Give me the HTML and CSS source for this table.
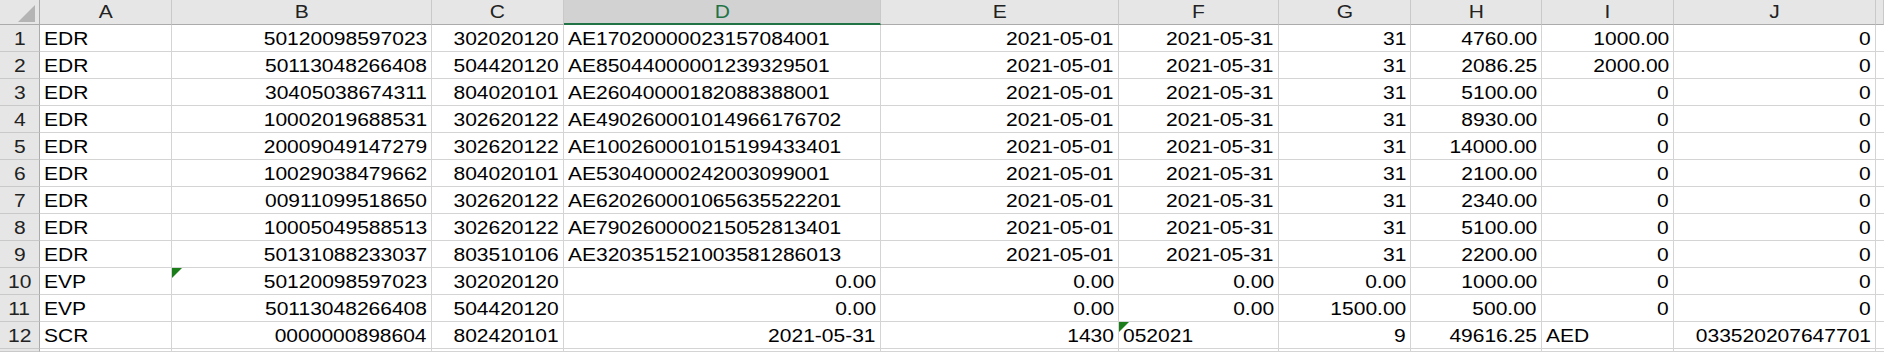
FILE: index.html
```html
<!DOCTYPE html>
<html>
<head>
<meta charset="utf-8">
<link rel="stylesheet" href="styles.css">
</head>
<body>
<div class="sheet">
  <div class="corner"><div class="corner-tri"></div></div>
  <div class="ch"><span class="t c">A</span></div>
  <div class="ch"><span class="t c">B</span></div>
  <div class="ch"><span class="t c">C</span></div>
  <div class="ch sel"><span class="t c">D</span></div>
  <div class="ch"><span class="t c">E</span></div>
  <div class="ch"><span class="t c">F</span></div>
  <div class="ch"><span class="t c">G</span></div>
  <div class="ch"><span class="t c">H</span></div>
  <div class="ch"><span class="t c">I</span></div>
  <div class="ch"><span class="t c">J</span></div>
  <div class="ch"></div>

  <div class="rh"><span class="t c">1</span></div>
  <div class="cell"><span class="t l">EDR</span></div>
  <div class="cell r"><span class="t rr">50120098597023</span></div>
  <div class="cell r"><span class="t rr">302020120</span></div>
  <div class="cell"><span class="t l">AE17020000023157084001</span></div>
  <div class="cell r"><span class="t rr">2021-05-01</span></div>
  <div class="cell r"><span class="t rr">2021-05-31</span></div>
  <div class="cell r"><span class="t rr">31</span></div>
  <div class="cell r"><span class="t rr">4760.00</span></div>
  <div class="cell r"><span class="t rr">1000.00</span></div>
  <div class="cell r"><span class="t rr">0</span></div>
  <div class="cell"></div>

  <div class="rh"><span class="t c">2</span></div>
  <div class="cell"><span class="t l">EDR</span></div>
  <div class="cell r"><span class="t rr">50113048266408</span></div>
  <div class="cell r"><span class="t rr">504420120</span></div>
  <div class="cell"><span class="t l">AE85044000001239329501</span></div>
  <div class="cell r"><span class="t rr">2021-05-01</span></div>
  <div class="cell r"><span class="t rr">2021-05-31</span></div>
  <div class="cell r"><span class="t rr">31</span></div>
  <div class="cell r"><span class="t rr">2086.25</span></div>
  <div class="cell r"><span class="t rr">2000.00</span></div>
  <div class="cell r"><span class="t rr">0</span></div>
  <div class="cell"></div>

  <div class="rh"><span class="t c">3</span></div>
  <div class="cell"><span class="t l">EDR</span></div>
  <div class="cell r"><span class="t rr">30405038674311</span></div>
  <div class="cell r"><span class="t rr">804020101</span></div>
  <div class="cell"><span class="t l">AE26040000182088388001</span></div>
  <div class="cell r"><span class="t rr">2021-05-01</span></div>
  <div class="cell r"><span class="t rr">2021-05-31</span></div>
  <div class="cell r"><span class="t rr">31</span></div>
  <div class="cell r"><span class="t rr">5100.00</span></div>
  <div class="cell r"><span class="t rr">0</span></div>
  <div class="cell r"><span class="t rr">0</span></div>
  <div class="cell"></div>

  <div class="rh"><span class="t c">4</span></div>
  <div class="cell"><span class="t l">EDR</span></div>
  <div class="cell r"><span class="t rr">10002019688531</span></div>
  <div class="cell r"><span class="t rr">302620122</span></div>
  <div class="cell"><span class="t l">AE490260001014966176702</span></div>
  <div class="cell r"><span class="t rr">2021-05-01</span></div>
  <div class="cell r"><span class="t rr">2021-05-31</span></div>
  <div class="cell r"><span class="t rr">31</span></div>
  <div class="cell r"><span class="t rr">8930.00</span></div>
  <div class="cell r"><span class="t rr">0</span></div>
  <div class="cell r"><span class="t rr">0</span></div>
  <div class="cell"></div>

  <div class="rh"><span class="t c">5</span></div>
  <div class="cell"><span class="t l">EDR</span></div>
  <div class="cell r"><span class="t rr">20009049147279</span></div>
  <div class="cell r"><span class="t rr">302620122</span></div>
  <div class="cell"><span class="t l">AE100260001015199433401</span></div>
  <div class="cell r"><span class="t rr">2021-05-01</span></div>
  <div class="cell r"><span class="t rr">2021-05-31</span></div>
  <div class="cell r"><span class="t rr">31</span></div>
  <div class="cell r"><span class="t rr">14000.00</span></div>
  <div class="cell r"><span class="t rr">0</span></div>
  <div class="cell r"><span class="t rr">0</span></div>
  <div class="cell"></div>

  <div class="rh"><span class="t c">6</span></div>
  <div class="cell"><span class="t l">EDR</span></div>
  <div class="cell r"><span class="t rr">10029038479662</span></div>
  <div class="cell r"><span class="t rr">804020101</span></div>
  <div class="cell"><span class="t l">AE53040000242003099001</span></div>
  <div class="cell r"><span class="t rr">2021-05-01</span></div>
  <div class="cell r"><span class="t rr">2021-05-31</span></div>
  <div class="cell r"><span class="t rr">31</span></div>
  <div class="cell r"><span class="t rr">2100.00</span></div>
  <div class="cell r"><span class="t rr">0</span></div>
  <div class="cell r"><span class="t rr">0</span></div>
  <div class="cell"></div>

  <div class="rh"><span class="t c">7</span></div>
  <div class="cell"><span class="t l">EDR</span></div>
  <div class="cell r"><span class="t rr">00911099518650</span></div>
  <div class="cell r"><span class="t rr">302620122</span></div>
  <div class="cell"><span class="t l">AE620260001065635522201</span></div>
  <div class="cell r"><span class="t rr">2021-05-01</span></div>
  <div class="cell r"><span class="t rr">2021-05-31</span></div>
  <div class="cell r"><span class="t rr">31</span></div>
  <div class="cell r"><span class="t rr">2340.00</span></div>
  <div class="cell r"><span class="t rr">0</span></div>
  <div class="cell r"><span class="t rr">0</span></div>
  <div class="cell"></div>

  <div class="rh"><span class="t c">8</span></div>
  <div class="cell"><span class="t l">EDR</span></div>
  <div class="cell r"><span class="t rr">10005049588513</span></div>
  <div class="cell r"><span class="t rr">302620122</span></div>
  <div class="cell"><span class="t l">AE790260000215052813401</span></div>
  <div class="cell r"><span class="t rr">2021-05-01</span></div>
  <div class="cell r"><span class="t rr">2021-05-31</span></div>
  <div class="cell r"><span class="t rr">31</span></div>
  <div class="cell r"><span class="t rr">5100.00</span></div>
  <div class="cell r"><span class="t rr">0</span></div>
  <div class="cell r"><span class="t rr">0</span></div>
  <div class="cell"></div>

  <div class="rh"><span class="t c">9</span></div>
  <div class="cell"><span class="t l">EDR</span></div>
  <div class="cell r"><span class="t rr">50131088233037</span></div>
  <div class="cell r"><span class="t rr">803510106</span></div>
  <div class="cell"><span class="t l">AE320351521003581286013</span></div>
  <div class="cell r"><span class="t rr">2021-05-01</span></div>
  <div class="cell r"><span class="t rr">2021-05-31</span></div>
  <div class="cell r"><span class="t rr">31</span></div>
  <div class="cell r"><span class="t rr">2200.00</span></div>
  <div class="cell r"><span class="t rr">0</span></div>
  <div class="cell r"><span class="t rr">0</span></div>
  <div class="cell"></div>

  <div class="rh"><span class="t c">10</span></div>
  <div class="cell"><span class="t l">EVP</span></div>
  <div class="cell r mark"><span class="flag"></span><span class="t rr">50120098597023</span></div>
  <div class="cell r"><span class="t rr">302020120</span></div>
  <div class="cell r"><span class="t rr">0.00</span></div>
  <div class="cell r"><span class="t rr">0.00</span></div>
  <div class="cell r"><span class="t rr">0.00</span></div>
  <div class="cell r"><span class="t rr">0.00</span></div>
  <div class="cell r"><span class="t rr">1000.00</span></div>
  <div class="cell r"><span class="t rr">0</span></div>
  <div class="cell r"><span class="t rr">0</span></div>
  <div class="cell"></div>

  <div class="rh"><span class="t c">11</span></div>
  <div class="cell"><span class="t l">EVP</span></div>
  <div class="cell r"><span class="t rr">50113048266408</span></div>
  <div class="cell r"><span class="t rr">504420120</span></div>
  <div class="cell r"><span class="t rr">0.00</span></div>
  <div class="cell r"><span class="t rr">0.00</span></div>
  <div class="cell r"><span class="t rr">0.00</span></div>
  <div class="cell r"><span class="t rr">1500.00</span></div>
  <div class="cell r"><span class="t rr">500.00</span></div>
  <div class="cell r"><span class="t rr">0</span></div>
  <div class="cell r"><span class="t rr">0</span></div>
  <div class="cell"></div>

  <div class="rh"><span class="t c">12</span></div>
  <div class="cell"><span class="t l">SCR</span></div>
  <div class="cell r"><span class="t rr">0000000898604</span></div>
  <div class="cell r"><span class="t rr">802420101</span></div>
  <div class="cell r"><span class="t rr">2021-05-31</span></div>
  <div class="cell r"><span class="t rr">1430</span></div>
  <div class="cell mark"><span class="flag"></span><span class="t l">052021</span></div>
  <div class="cell r"><span class="t rr">9</span></div>
  <div class="cell r"><span class="t rr">49616.25</span></div>
  <div class="cell"><span class="t l">AED</span></div>
  <div class="cell r"><span class="t rr">033520207647701</span></div>
  <div class="cell"></div>

  <div class="rh"></div>
  <div class="cell"></div>
  <div class="cell"></div>
  <div class="cell"></div>
  <div class="cell"></div>
  <div class="cell"></div>
  <div class="cell"></div>
  <div class="cell"></div>
  <div class="cell"></div>
  <div class="cell"></div>
  <div class="cell"></div>
  <div class="cell"></div>
</div>
</body>
</html>
```

FILE: styles.css
```css
html, body {
  margin: 0;
  padding: 0;
  background: #ffffff;
  overflow: hidden;
}

.sheet {
  display: grid;
  grid-template-columns: 40px 132px 260px 132px 317px 238px 160px 132px 131px 132px 202px 8px;
  grid-template-rows: 25px repeat(12, 27px) 3px;
  font-family: "Liberation Sans", Arial, sans-serif;
  font-size: 17.5px;
  color: #000;
  width: 1884px;
  height: 352px;
  overflow: hidden;
}

.corner {
  background: #e6e6e6;
  border-right: 1px solid #ababab;
  border-bottom: 1px solid #ababab;
  display: flex;
  justify-content: flex-end;
  align-items: flex-end;
  padding: 0 4px 2px 0;
  box-sizing: border-box;
}

.corner-tri {
  width: 17px;
  height: 17px;
  background: #b4b4b4;
  clip-path: polygon(100% 0, 100% 100%, 0 100%);
}

.ch {
  background: #e6e6e6;
  border-right: 1px solid #c9c9c9;
  border-bottom: 1px solid #ababab;
  box-sizing: border-box;
  display: flex;
  justify-content: center;
  align-items: flex-end;
  line-height: 20px;
  padding-bottom: 2px;
  color: #222;
  overflow: hidden;
}

.ch.sel {
  background: #d2d2d2;
  color: #217346;
  border-bottom: 2px solid #217346;
  padding-bottom: 1px;
}

.rh {
  background: #e6e6e6;
  border-right: 1px solid #ababab;
  border-bottom: 1px solid #c9c9c9;
  box-sizing: border-box;
  display: flex;
  justify-content: center;
  align-items: flex-end;
  line-height: 20px;
  padding-bottom: 2px;
  color: #222;
  overflow: hidden;
}

.cell {
  position: relative;
  border-right: 1px solid #d4d4d4;
  border-bottom: 1px solid #d4d4d4;
  box-sizing: border-box;
  display: flex;
  align-items: flex-end;
  justify-content: flex-start;
  line-height: 20px;
  padding: 0 4px 2px 4px;
  white-space: nowrap;
  overflow: visible;
}

.cell.r {
  justify-content: flex-end;
}

.t {
  display: inline-block;
  transform: scaleX(1.2);
}

.t.l { transform-origin: left center; }
.t.rr { transform-origin: right center; }
.t.c { transform-origin: center center; }

.flag {
  position: absolute;
  left: 0;
  top: 0;
  width: 10px;
  height: 10px;
  background: #1a7d1a;
  clip-path: polygon(0 0, 100% 0, 0 100%);
}
```
